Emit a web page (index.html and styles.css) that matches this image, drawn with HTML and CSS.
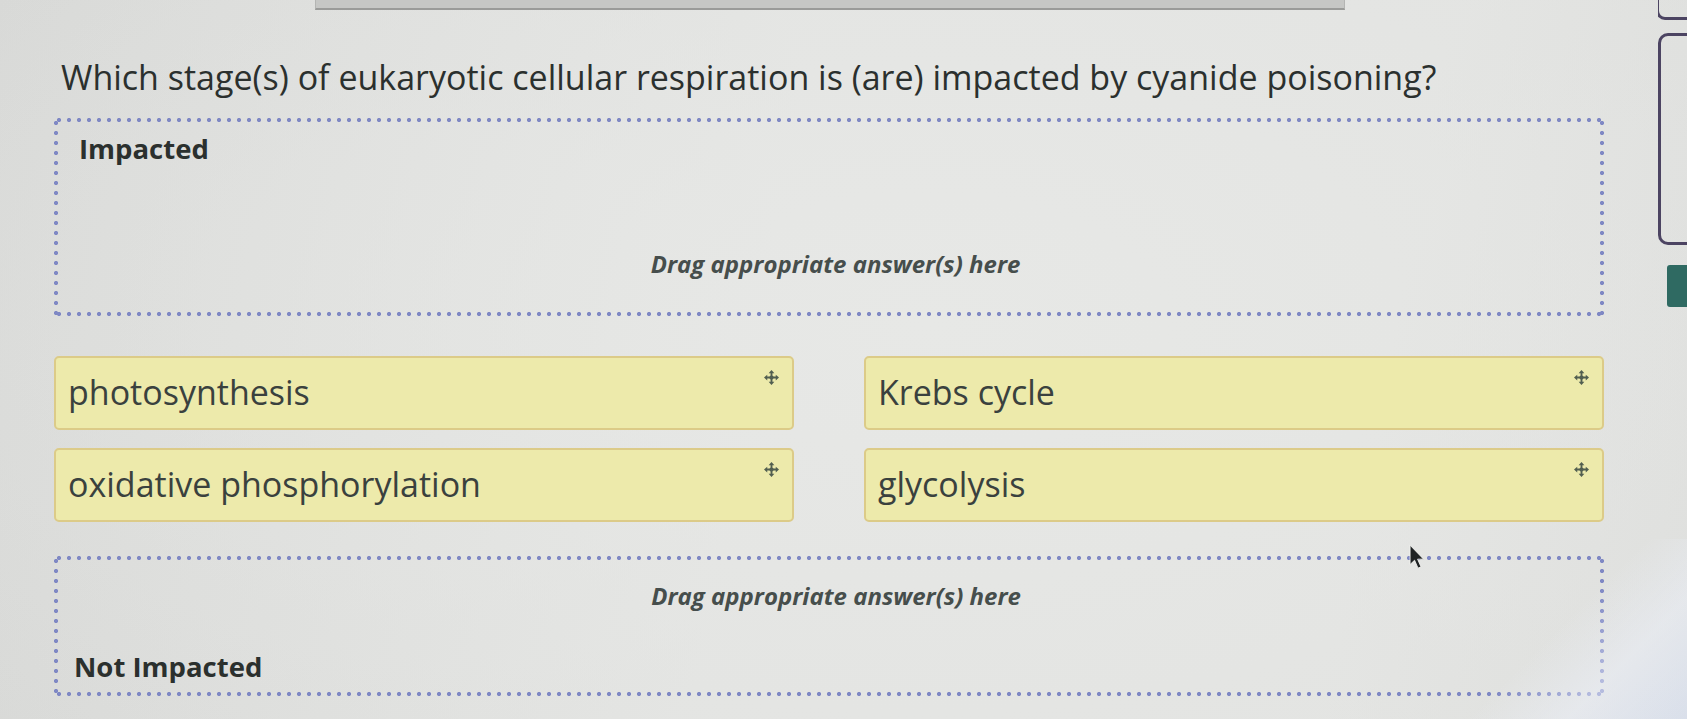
FILE: index.html
```html
<!DOCTYPE html>
<html lang="en">
<head>
<meta charset="utf-8">
<title>Cellular respiration – drag and drop</title>
<link rel="stylesheet" href="styles.css">
</head>
<body>
<div class="screen">
  <main class="quiz">
    <div class="topbar"></div>
    <h1 class="question">Which stage(s) of eukaryotic cellular respiration is (are) impacted by cyanide poisoning?</h1>

    <section class="dropzone zone-impacted">
      <h2 class="zone-label">Impacted</h2>
      <p class="zone-hint">Drag appropriate answer(s) here</p>
    </section>

    <ul class="choices">
      <li class="choice"><span>photosynthesis</span>
        <svg class="move" viewBox="0 0 12 12"><path d="M6 0L8.3 2.6H3.7ZM6 12L3.7 9.4H8.3ZM0 6L2.6 3.7V8.3ZM12 6L9.4 8.3V3.7Z"/><path class="bar" d="M6 2v8M2 6h8"/><circle cx="6" cy="6" r="1.7"/></svg>
      </li>
      <li class="choice"><span>Krebs cycle</span>
        <svg class="move" viewBox="0 0 12 12"><path d="M6 0L8.3 2.6H3.7ZM6 12L3.7 9.4H8.3ZM0 6L2.6 3.7V8.3ZM12 6L9.4 8.3V3.7Z"/><path class="bar" d="M6 2v8M2 6h8"/><circle cx="6" cy="6" r="1.7"/></svg>
      </li>
      <li class="choice"><span>oxidative phosphorylation</span>
        <svg class="move" viewBox="0 0 12 12"><path d="M6 0L8.3 2.6H3.7ZM6 12L3.7 9.4H8.3ZM0 6L2.6 3.7V8.3ZM12 6L9.4 8.3V3.7Z"/><path class="bar" d="M6 2v8M2 6h8"/><circle cx="6" cy="6" r="1.7"/></svg>
      </li>
      <li class="choice"><span>glycolysis</span>
        <svg class="move" viewBox="0 0 12 12"><path d="M6 0L8.3 2.6H3.7ZM6 12L3.7 9.4H8.3ZM0 6L2.6 3.7V8.3ZM12 6L9.4 8.3V3.7Z"/><path class="bar" d="M6 2v8M2 6h8"/><circle cx="6" cy="6" r="1.7"/></svg>
      </li>
    </ul>

    <section class="dropzone zone-not">
      <p class="zone-hint">Drag appropriate answer(s) here</p>
      <h2 class="zone-label">Not Impacted</h2>
    </section>
  </main>

  <aside class="side">
    <div class="side-tab"></div>
    <div class="side-panel"></div>
    <div class="side-button"></div>
  </aside>
</div>

<svg class="pointer" viewBox="0 0 14 24"><path d="M1 1V19L5.2 15L8.4 22.4L11.2 21.2L8 14H13.6Z"/></svg>
<div class="glare"></div>
</body>
</html>
```

FILE: styles.css
```css
html, body {
  margin: 0;
  height: 100%;
  overflow: hidden;
}

body {
  position: relative;
  font-family: "Open Sans", "Liberation Sans", sans-serif;
  color: #353a38;
  background:
    radial-gradient(ellipse 70% 90% at 55% 45%, #e7e8e6 0%, rgba(231, 232, 230, 0) 100%),
    linear-gradient(100deg, #d7d8d6 0%, #e2e3e1 45%, #e2e3e1 80%, #dcdddb 100%);
}

.screen {
  display: flex;
  height: 100%;
}

/* ---------- main quiz column ---------- */
.quiz {
  width: 1658px;
  flex: none;
  box-sizing: border-box;
  padding-left: 54px;
  padding-right: 54px;
}

.topbar {
  margin-left: 261px;
  width: 1028px;
  height: 8px;
  background: #c6c7c5;
  border: 1px solid #b4b5b3;
  border-top: 0;
  border-bottom: 2px solid #9a9b99;
}

.question {
  margin: 47px 0 0 7px;
  font-size: 34px;
  line-height: 40px;
  font-weight: 400;
  color: #2b302e;
}

/* dotted drop zones */
.dropzone {
  box-sizing: border-box;
  margin: 0;
  background:
    radial-gradient(circle, #7f88c4 1.7px, rgba(127, 136, 196, 0) 2.4px) 0 0 / 10px 4px repeat-x,
    radial-gradient(circle, #7f88c4 1.7px, rgba(127, 136, 196, 0) 2.4px) 0 100% / 10px 4px repeat-x,
    radial-gradient(circle, #7f88c4 1.7px, rgba(127, 136, 196, 0) 2.4px) 0 0 / 4px 10px repeat-y,
    radial-gradient(circle, #7f88c4 1.7px, rgba(127, 136, 196, 0) 2.4px) 100% 0 / 4px 10px repeat-y;
  display: flex;
  flex-direction: column;
}

.zone-label {
  margin: 0;
  font-size: 27.5px;
  line-height: 30px;
  font-weight: 700;
  color: #2b302e;
}

.zone-hint {
  margin: 0;
  text-align: center;
  font-size: 24px;
  line-height: 30px;
  font-style: italic;
  font-weight: 700;
  color: #464e4c;
}

.zone-impacted {
  margin-top: 21px;
  height: 198px;
  padding: 16px 24px 0 25px;
}

.zone-impacted .zone-hint {
  margin-top: 85px;
  padding-left: 12px;
}

.zone-not {
  margin-top: 34px;
  height: 140px;
  padding: 25px 24px 0 20px;
}

.zone-not .zone-hint {
  padding-left: 18px;
}

.zone-not .zone-label {
  margin-top: 41px;
}

/* draggable answer cards */
.choices {
  list-style: none;
  margin: 40px 0 0;
  padding: 0;
  display: grid;
  grid-template-columns: 1fr 1fr;
  column-gap: 70px;
  row-gap: 18px;
}

.choice {
  position: relative;
  box-sizing: border-box;
  height: 74px;
  padding: 0 12px;
  display: flex;
  align-items: center;
  background: #edeaab;
  border: 2px solid #dccb88;
  border-radius: 5px;
  font-size: 34px;
  color: #3a413e;
}

.choice span {
  margin-top: -3px;
}

.move {
  position: absolute;
  top: 12px;
  right: 13px;
  width: 15px;
  height: 15px;
  fill: #525f50;
}

.move .bar {
  stroke: #525f50;
  stroke-width: 1.5;
  fill: none;
}

/* ---------- right edge panel ---------- */
.side {
  flex: 1;
  overflow: hidden;
  display: flex;
  flex-direction: column;
}

.side-tab {
  margin-top: -12px;
  margin-left: -2px;
  width: 60px;
  height: 26px;
  border: 3px solid #4c4462;
  border-radius: 9px;
}

.side-panel {
  margin-top: 13px;
  width: 60px;
  height: 206px;
  border: 3px solid #4c4462;
  border-radius: 10px;
}

.side-button {
  margin: 20px 0 0 9px;
  width: 40px;
  height: 42px;
  background: #2f6a62;
  border-radius: 3px 0 0 3px;
}

/* ---------- overlays ---------- */
.pointer {
  position: absolute;
  left: 1409px;
  top: 544px;
  width: 15px;
  height: 26px;
  fill: #1f2324;
  stroke: #f4f4f2;
  stroke-width: 0.8;
  stroke-linejoin: round;
}

.glare {
  position: absolute;
  right: 0;
  bottom: 0;
  width: 220px;
  height: 180px;
  background: linear-gradient(135deg, rgba(255, 255, 255, 0) 45%, rgba(236, 240, 250, 0.5) 70%, rgba(214, 224, 246, 0.55) 100%);
  pointer-events: none;
}
```
